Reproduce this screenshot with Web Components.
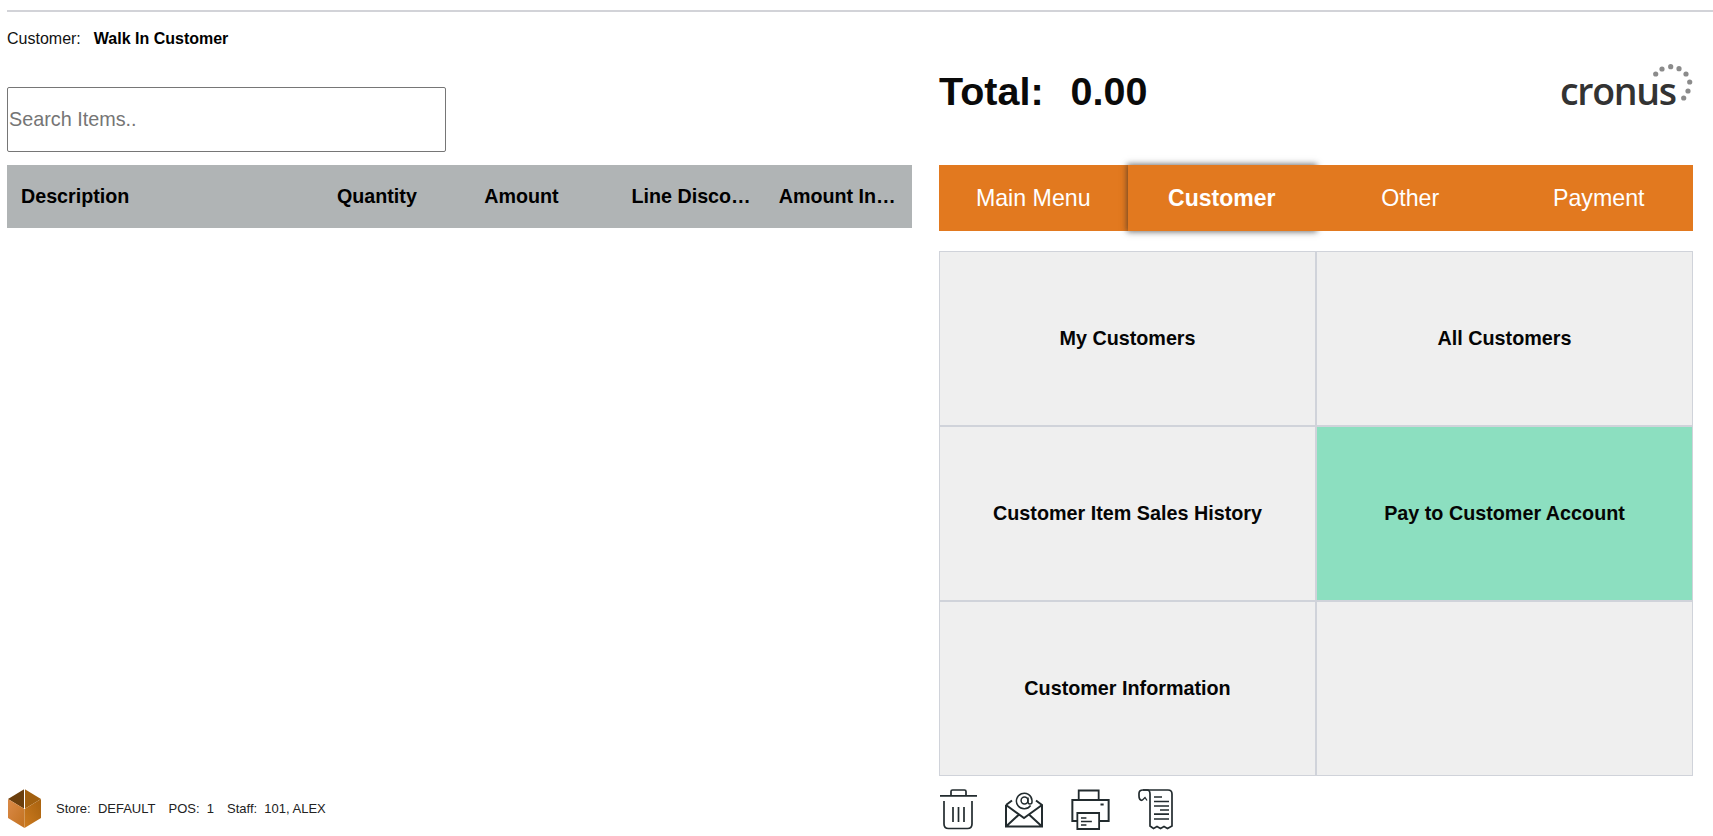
<!DOCTYPE html>
<html>
<head>
<meta charset="utf-8">
<title>POS</title>
<style>
  html, body { margin: 0; background: #fff; overflow: hidden; }
  body { font-family: "Liberation Sans", Arial, sans-serif; color: #000; }
</style>
</head>
<body>
<pos-app></pos-app>

<script>
// customer name above the search box
class PosCustomer extends HTMLElement {
  constructor() {
    super();
    this.attachShadow({ mode: 'open' });
    this.shadowRoot.innerHTML = `
      <style>
        :host { display: flex; gap: 13px; height: 20px; line-height: 20px; font-size: 16px; margin-left: 7px; color: #111; }
        b { color: #000; }
      </style>
      <span>Customer:</span><b>${this.getAttribute('name')}</b>`;
  }
}

class PosSearch extends HTMLElement {
  constructor() {
    super();
    this.attachShadow({ mode: 'open' });
    this.shadowRoot.innerHTML = `
      <style>
        :host { display: block; margin-left: 7px; width: 439px; height: 65px; }
        input {
          box-sizing: border-box; width: 100%; height: 100%; padding: 0 1px;
          border: 1px solid #767676; border-radius: 2px; outline: 0;
          font: 19.8px "Liberation Sans", Arial, sans-serif;
        }
      </style>
      <input type="text" placeholder="Search Items..">`;
  }
}

// grey header row of the item table
class PosTableHead extends HTMLElement {
  constructor() {
    super();
    this.attachShadow({ mode: 'open' });
    const cols = ['Description', 'Quantity', 'Amount', 'Line Disco…', 'Amount In…'];
    this.shadowRoot.innerHTML = `
      <style>
        :host {
          display: grid; grid-template-columns: 316px repeat(4, 1fr);
          margin-left: 7px; height: 63px; background: #b0b4b5;
          font-weight: bold; font-size: 19.7px;
        }
        div { padding: 0 14px; line-height: 63px; white-space: nowrap; }
      </style>
      ${cols.map(c => `<div>${c}</div>`).join('')}`;
  }
}

class PosFooter extends HTMLElement {
  constructor() {
    super();
    this.attachShadow({ mode: 'open' });
    this.shadowRoot.innerHTML = `
      <style>
        :host { display: flex; align-items: center; margin-left: 7px; height: 41px; font-size: 13px; color: #222; }
        svg { width: 33px; height: 39px; margin: 0 15px 0 1px; flex: none; }
        span { white-space: pre; }
        .g { margin-left: 13px; }
      </style>
      <svg viewBox="0 0 33 39">
        <defs>
          <linearGradient id="l" x1="0" y1="0" x2="1" y2="1"><stop offset="0" stop-color="#da8a48"/><stop offset="1" stop-color="#c2711f"/></linearGradient>
          <linearGradient id="r" x1="0" y1="1" x2="1" y2="0"><stop offset="0" stop-color="#cd7b1f"/><stop offset="1" stop-color="#a8620f"/></linearGradient>
        </defs>
        <polygon points="16.5,0 0,10 16.5,20" fill="#6b3f0d"/>
        <polygon points="16.5,0 33,10 16.5,20" fill="#a2600f"/>
        <polygon points="0,10 16.5,20 16.5,39 0,29" fill="url(#l)"/>
        <polygon points="33,10 16.5,20 16.5,39 33,29" fill="url(#r)"/>
        <path d="M16.5 0V20" stroke="#fff" stroke-width="1"/>
      </svg>
      <span>Store:  DEFAULT</span><span class="g">POS:  1</span><span class="g">Staff:  101, ALEX</span>`;
  }
}

class PosTotal extends HTMLElement {
  constructor() {
    super();
    this.attachShadow({ mode: 'open' });
    this.shadowRoot.innerHTML = `
      <style>
        :host { display: flex; gap: 27px; font-weight: bold; font-size: 39.5px; line-height: 44px; color: #0a0a0a; }
      </style>
      <span>Total:</span><span>${this.getAttribute('value')}</span>`;
  }
}

// company logo, the word stays real text and the dots are an svg over it
class PosLogo extends HTMLElement {
  constructor() {
    super();
    this.attachShadow({ mode: 'open' });
    const dots = [[22.7,14],[29,9],[37.7,6.7],[46,8.7],[53,14],[56.7,22],[55,31],[50.7,38]];
    this.shadowRoot.innerHTML = `
      <style>
        :host { display: block; position: relative; width: 133px; height: 60px; }
        span {
          display: block; padding-top: 9px;
          font: 600 37.5px/44px "Open Sans", sans-serif; color: #333; letter-spacing: -1.3px;
        }
        svg { position: absolute; right: 0; top: 0; width: 60px; height: 60px; }
      </style>
      <span>cronus</span>
      <svg viewBox="0 0 60 60">${dots.map(d => `<circle cx="${d[0]}" cy="${d[1]}" r="2.6" fill="#8b8b8b"/>`).join('')}</svg>`;
  }
}

class PosTabs extends HTMLElement {
  constructor() {
    super();
    this.attachShadow({ mode: 'open' });
    const active = this.getAttribute('active');
    const tabs = this.getAttribute('tabs').split(',');
    this.shadowRoot.innerHTML = `
      <style>
        :host {
          display: grid; grid-template-columns: repeat(4, 1fr); height: 66px;
          background: #e2791f; color: #fff; font-size: 23.2px;
        }
        div { position: relative; background: #e2791f; line-height: 66px; text-align: center; }
        .on { font-weight: bold; font-size: 23px; box-shadow: 0 0 6px 1px rgba(40,40,40,.65); }
      </style>
      ${tabs.map(t => `<div class="${t === active ? 'on' : ''}">${t}</div>`).join('')}`;
  }
}

class PosTile extends HTMLElement {
  constructor() {
    super();
    this.attachShadow({ mode: 'open' });
    this.shadowRoot.innerHTML = `
      <style>
        :host {
          display: flex; align-items: center; justify-content: center; box-sizing: border-box;
          border: 1px solid #d0d3da; background: #efefef;
          font-weight: bold; font-size: 19.75px; color: #050505;
        }
        :host([green]) { background: #8cdfc0; }
      </style>
      <slot></slot>`;
  }
}

class PosActions extends HTMLElement {
  constructor() {
    super();
    this.attachShadow({ mode: 'open' });
    this.shadowRoot.innerHTML = `
      <style>
        :host { display: flex; align-items: flex-start; height: 41px; margin-left: 1px; }
        svg { display: block; height: 41px; fill: none; stroke: #222b2e; stroke-width: 1.7; }
      </style>
      <svg viewBox="0 0 37 41" width="37" style="margin-right:28px">
        <path d="M0 6.8H37M11 6.8V2.5Q11 1 12.5 1H24.5Q26 1 26 2.5V6.8"/>
        <path d="M4 12V35Q4 39.5 8.5 39.5H27.5Q32 39.5 32 35V12"/>
        <path d="M13 18V33M18.5 18V33M24 18V33"/>
      </svg>
      <svg viewBox="0 0 38 41" width="38" style="margin-right:28px">
        <path d="M1 16V37.5H37V16L31 11.5M1 16L7 11.5M1 16L19 29L37 16M1 37.5L14 25.5M37 37.5L24 25.5" stroke-width="2"/>
        <path d="M25.6 16.5A7.8 7.8 0 1 1 27 11.5V13A2 2 0 0 1 23 13V8.5" stroke-width="1.5"/>
        <circle cx="19.5" cy="11.5" r="3.4" stroke-width="1.5"/>
      </svg>
      <svg viewBox="0 0 43 41" width="39" preserveAspectRatio="none" style="margin-right:28px">
        <path d="M8.5 11V1.5H30.5V11" stroke-width="2"/>
        <path d="M7 32H1.5V11H41.5V32H31" stroke-width="2.2"/>
        <path d="M7 24H31V40H7Z" stroke-width="2"/>
        <path d="M11 29H17M11 32.5H23M11 36H17" stroke-width="1.5"/>
        <path d="M32.5 15.5H36" stroke-width="2"/>
      </svg>
      <svg viewBox="0 0 37 41" width="37">
        <path d="M4 11.5Q1 11 1 7V4.5Q1 1 5 1H9Q12 1 12 5V37L15.5 39.5L19 37.5L22.5 39.5L26 37.5L29.5 39.5L34 37V5" stroke-width="1.7"/>
        <path d="M5 1H30Q34 1 34 5" stroke-width="1.7"/>
        <path d="M4 11.5L7 8.5L9 11.5" stroke-width="1.3"/>
        <path d="M16 8H24M16 12.5H31M16 17H31M22 21H31M16 25.2H31M16 30H31" stroke-width="1.7"/>
      </svg>`;
  }
}

// page layout: two columns, items on the left and buttons on the right
class PosApp extends HTMLElement {
  constructor() {
    super();
    this.attachShadow({ mode: 'open' });
    this.shadowRoot.innerHTML = `
      <style>
        :host { display: block; width: 1713px; height: 836px; box-sizing: border-box; padding-top: 10px; }
        hr { height: 2px; margin: 0 0 0 7px; border: 0; background: #d2d3d8; }
        .main { display: grid; grid-template-columns: 912px 754px; column-gap: 27px; height: 824px; }
        .left, .right { display: flex; flex-direction: column; height: 818px; }
        .left { height: 817px; }
        pos-customer { margin-top: 17px; margin-bottom: 38px; }
        pos-search { margin-bottom: 13px; }
        pos-footer { margin-top: auto; }
        .top { display: flex; justify-content: space-between; height: 153px; box-sizing: border-box; padding-top: 57px; }
        pos-logo { margin-top: -9px; }
        .tiles {
          display: grid; grid-template-columns: 377px 377px; grid-auto-rows: 175px;
          margin: 20px 0 13px;
        }
      </style>
      <hr>
      <div class="main">
        <div class="left">
          <pos-customer name="Walk In Customer"></pos-customer>
          <pos-search></pos-search>
          <pos-table-head></pos-table-head>
          <pos-footer></pos-footer>
        </div>
        <div class="right">
          <div class="top">
            <pos-total value="0.00"></pos-total>
            <pos-logo></pos-logo>
          </div>
          <pos-tabs tabs="Main Menu,Customer,Other,Payment" active="Customer"></pos-tabs>
          <div class="tiles">
            <pos-tile>My Customers</pos-tile>
            <pos-tile>All Customers</pos-tile>
            <pos-tile>Customer Item Sales History</pos-tile>
            <pos-tile green>Pay to Customer Account</pos-tile>
            <pos-tile>Customer Information</pos-tile>
            <pos-tile></pos-tile>
          </div>
          <pos-actions></pos-actions>
        </div>
      </div>`;
  }
}

customElements.define('pos-customer', PosCustomer);
customElements.define('pos-search', PosSearch);
customElements.define('pos-table-head', PosTableHead);
customElements.define('pos-footer', PosFooter);
customElements.define('pos-total', PosTotal);
customElements.define('pos-logo', PosLogo);
customElements.define('pos-tabs', PosTabs);
customElements.define('pos-tile', PosTile);
customElements.define('pos-actions', PosActions);
customElements.define('pos-app', PosApp);
</script>
</body>
</html>
